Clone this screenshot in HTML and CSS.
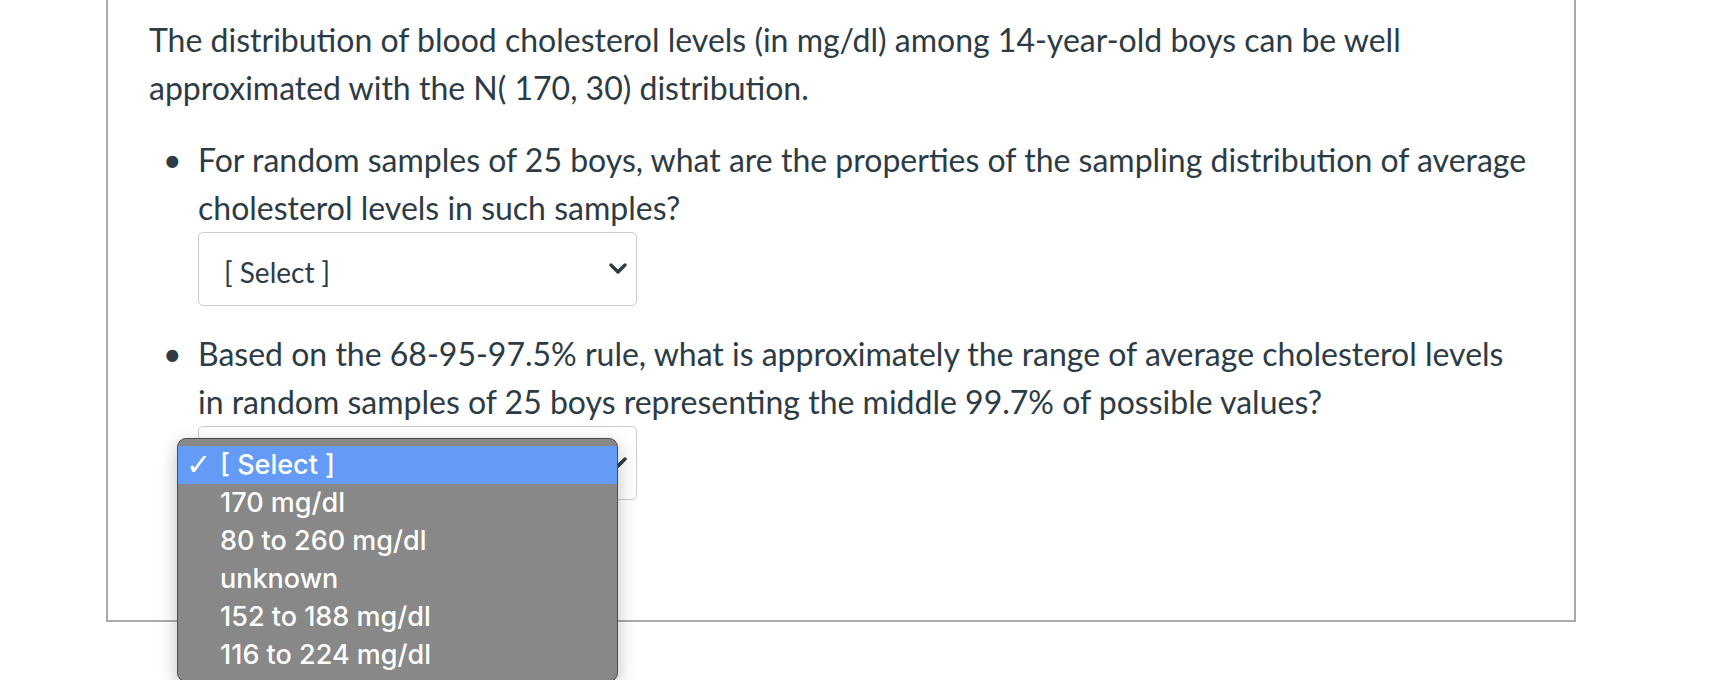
FILE: index.html
```html
<!DOCTYPE html>
<html>

<head>
    <meta charset="utf-8" />
    <title>Quiz Question</title>
    <link rel="stylesheet" href="styles.css">
</head>

<body>
    <div class="card">
        <p class="intro">The distribution of blood cholesterol levels (in mg/dl) among 14-year-old boys can be well
            approximated with the N( 170, 30) distribution.</p>

        <ul class="questions">
            <li>
                <p>For random samples of 25 boys, what are the properties of the sampling distribution of average
                    cholesterol levels in such samples?</p>
                <div class="select">
                    <span class="selectText">[ Select ]</span>
                    <svg class="chevron" width="18" height="12" viewBox="0 0 18 12">
                        <polyline points="2,2 9,9 16,2" fill="none" stroke="#2d3b45" stroke-width="3.4"
                            stroke-linecap="round" stroke-linejoin="round" />
                    </svg>
                </div>
            </li>
            <li>
                <p>Based on the 68-95-97.5% rule, what is approximately the range of average cholesterol levels
                    in random samples of 25 boys representing the middle 99.7% of possible values?</p>
                <div class="select open">
                    <span class="selectText">[ Select ]</span>
                    <svg class="chevron" width="18" height="12" viewBox="0 0 18 12">
                        <polyline points="2,2 9,9 16,2" fill="none" stroke="#2d3b45" stroke-width="3.4"
                            stroke-linecap="round" stroke-linejoin="round" />
                    </svg>

                    <div class="options">
                        <div class="option selected"><span class="check">&#10003;</span>[ Select ]</div>
                        <div class="option">170 mg/dl</div>
                        <div class="option">80 to 260 mg/dl</div>
                        <div class="option">unknown</div>
                        <div class="option">152 to 188 mg/dl</div>
                        <div class="option">116 to 224 mg/dl</div>
                    </div>
                </div>
            </li>
        </ul>
    </div>
</body>

</html>
```

FILE: styles.css
```css
html {
    background: #ffffff;
}

body {
    margin: 0;
    min-height: 680px;
    font-family: Lato, "Open Sans", sans-serif;
    color: #2d3b45;
}

.card {
    margin-top: -2px;
    margin-left: 106px;
    width: 1381px;
    border: 2px solid #ababab;
    padding: 16px 44px 120px 41px;
    font-size: 32px;
    line-height: 48px;
}

.intro {
    margin: 0;
}

.questions {
    margin: 24px 0 0 0;
    padding-left: 49px;
}

.questions li {
    margin-bottom: 24px;
}

.questions li::marker {
    content: "\2022\00a0\00a0";
}

.questions li:last-child {
    margin-bottom: 0;
}

.questions p {
    margin: 0;
}

.select {
    position: relative;
    box-sizing: border-box;
    width: 439px;
    height: 74px;
    border: 1px solid #c7cdd1;
    border-radius: 5px;
    display: flex;
    align-items: center;
    justify-content: space-between;
    padding: 5px 9px 0 25px;
    font-size: 28px;
}

.chevron {
    display: block;
    margin-top: -5px;
}

.options {
    position: absolute;
    left: -22px;
    top: 11px;
    width: 441px;
    box-sizing: border-box;
    padding: 7px 0 7px 0;
    background: #888888;
    border: 1px solid #4d4d4d;
    border-radius: 9px;
    box-shadow: 0 6px 18px rgba(0, 0, 0, 0.25);
    font-family: Inter, "Liberation Sans", sans-serif;
    font-size: 27px;
    font-weight: 500;
    line-height: 38px;
    color: #ffffff;
    z-index: 2;
}

.option {
    height: 38px;
    padding-left: 42px;
    position: relative;
}

.option.selected {
    background: #639bf6;
}

.check {
    position: absolute;
    left: 8px;
    top: 0;
    font-family: "DejaVu Sans", sans-serif;
    font-size: 30px;
    font-weight: bold;
}
```
